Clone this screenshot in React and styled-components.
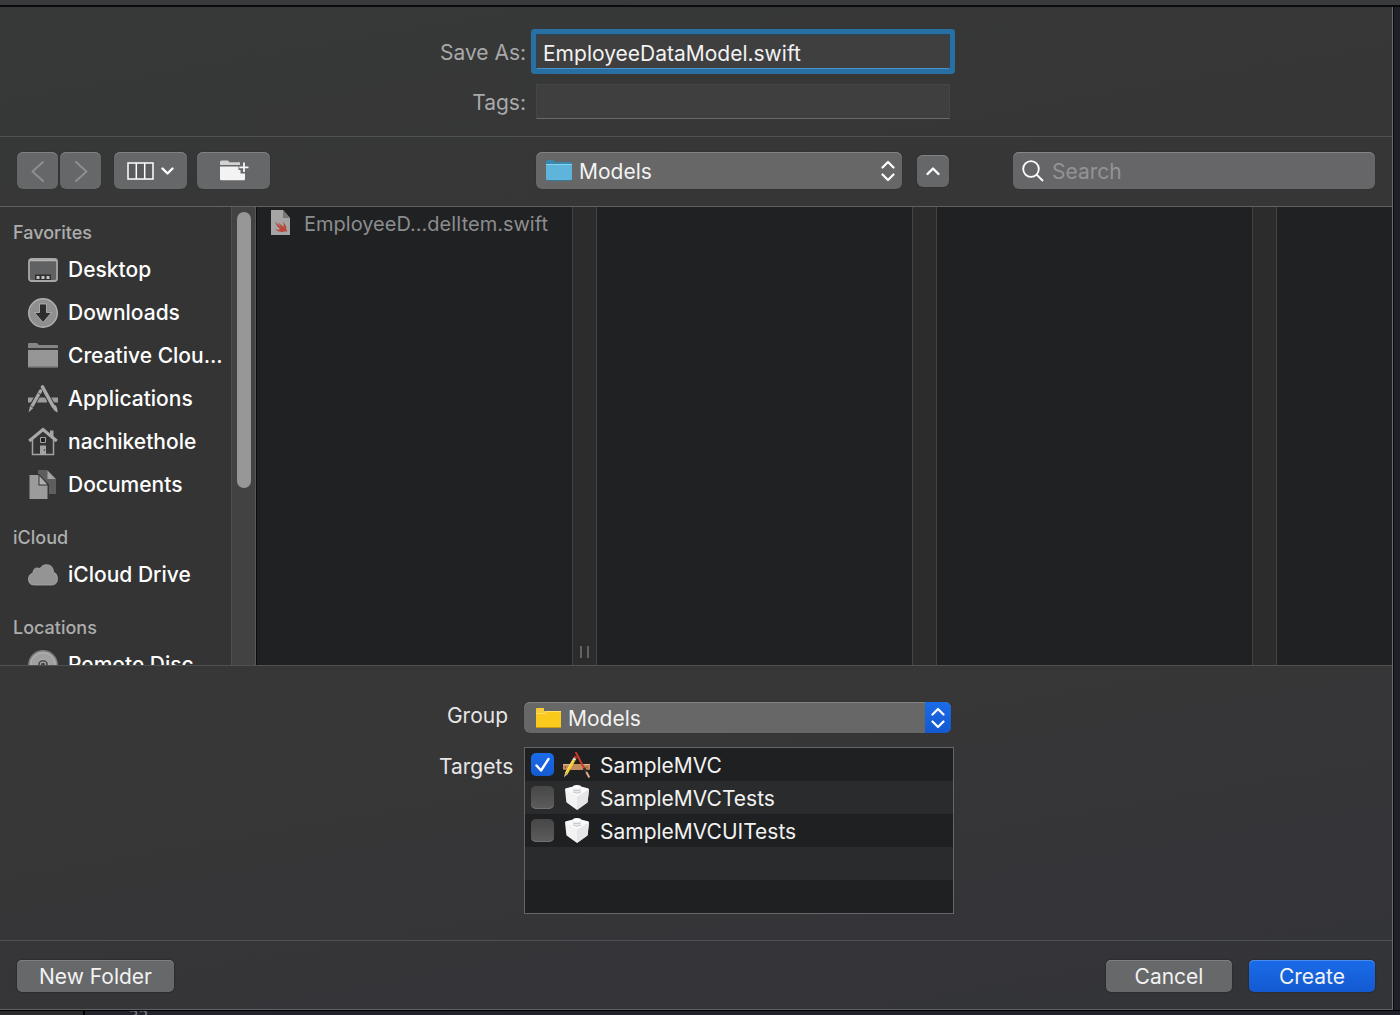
import { useState } from "react";
import styled, { createGlobalStyle } from "styled-components";

const GlobalStyle = createGlobalStyle`
    *{
        box-sizing:border-box;
    }
    body{
        margin:0;
        background-color:#1e1f28;
    }
    body, button, input, select{
        font-family:Inter, "Liberation Sans", sans-serif;
        font-size:21px;
        color:#f2f2f2;
    }
    svg{
        display:block;
        flex:none;
    }
`;

const Screen = styled.div`
    display:flex;
    flex-direction:column;
    height:100vh;
    min-height:800px;
`;
const WindowEdge = styled.div`
    height:7px;
    background-color:#393a3c;
    border-bottom:2px solid #0c0c0d;
`;
const Editor = styled.div`
    display:flex;
    height:5px;
    overflow:hidden;
    border-top:1px solid #000;
    background-color:#22222c;
`;
const EditorGutter = styled.div`
    width:85px;
    border-right:2px solid #000;
    background-color:#2a2a2c;
`;
const LineNumber = styled.span`
    padding-left:44px;
    font-family:"DejaVu Sans Mono", monospace;
    font-size:16px;
    line-height:12px;
    color:#7c7c84;
`;

const Sheet = styled.form`
    display:flex;
    flex-direction:column;
    flex:1;
    min-height:0;
    margin-right:7px;
    border-right:1px solid #6c6d70;
    border-bottom:1px solid #5f6063;
    background:linear-gradient(170deg, #373838 0%, #363637 30%, #373737 65%, #353539 85%, #333438 100%);
    box-shadow:1px 0 0 #08080a;
`;

const NameArea = styled.div`
    display:grid;
    grid-template-columns:86px 414px;
    justify-content:center;
    align-items:center;
    gap:15px 10px;
    padding:27px 2px 17px 0;
    border-bottom:1px solid #4f5051;
`;
const FieldLabel = styled.label`
    padding-top:2px;
    text-align:right;
    white-space:nowrap;
    color:${(props) => (props.$bright ? "#e6e6e6" : "#a9a9a9")};
`;
const TextField = styled.input`
    width:100%;
    height:35px;
    padding:4px 6px 0;
    border:1px solid #444546;
    border-bottom-color:#68696a;
    background-color:#3f3f40;
    outline:none;
    border-radius:0;
    ${(props) => props.$ring && `
        border-color:#28435a;
        border-bottom-color:#4a93c8;
        border-radius:1px;
        box-shadow:0 0 0 5px #286fa3;
    `}
`;

const Toolbar = styled.div`
    display:flex;
    align-items:center;
    padding:15px 17px 17px 17px;
    border-bottom:1px solid #5f6061;
`;
const ToolGroup = styled.div`
    display:flex;
    flex:1;
    gap:10px;
`;
const NavPair = styled.div`
    display:flex;
    gap:2px;
    margin-right:3px;
`;
const ToolButton = styled.button`
    display:flex;
    align-items:center;
    justify-content:center;
    gap:7px;
    width:${(props) => props.$width};
    height:${(props) => props.$height || "37px"};
    padding:0;
    border:none;
    border-radius:6px;
    background-color:#666768;
    box-shadow:inset 0 1px 0 #808182, 0 0 1px #222;
`;
const Popup = styled.div`
    display:flex;
    align-items:center;
    width:${(props) => props.$width};
    height:${(props) => props.$height};
    padding-left:${(props) => props.$pad};
    gap:7px;
    border-radius:6px;
    background-color:#676767;
    box-shadow:inset 0 1px 0 #838383, 0 0 1px #222;
    overflow:hidden;
`;
const PopupSelect = styled.select`
    flex:1;
    height:100%;
    padding:2px 0 0;
    border:none;
    outline:none;
    appearance:none;
    background-color:transparent;
`;
const PopupCap = styled.span`
    display:flex;
    align-items:center;
    justify-content:center;
    width:${(props) => (props.$blue ? "26px" : "28px")};
    height:100%;
    background:${(props) => (props.$blue ? "linear-gradient(#1b6ce8, #1259cf)" : "none")};
`;
const PathGroup = styled.div`
    display:flex;
    align-items:center;
    gap:15px;
    margin-right:64px;
`;
const SearchBox = styled.label`
    display:flex;
    align-items:center;
    gap:8px;
    width:362px;
    height:37px;
    padding-left:9px;
    border-radius:6px;
    background-color:#666668;
    box-shadow:inset 0 1px 0 #858587, 0 0 1px #222;
`;
const SearchInput = styled.input`
    flex:1;
    min-width:0;
    height:100%;
    padding:2px 0 0;
    border:none;
    outline:none;
    background-color:transparent;

    &::placeholder{
        color:#939395;
    }
`;

const Browser = styled.div`
    display:flex;
    flex:1;
    min-height:0;
    border-bottom:1px solid #505151;
`;
const Sidebar = styled.nav`
    width:231px;
    padding-top:9px;
    overflow:hidden;
    background-color:#343434;
`;
const SidebarSection = styled.section`
    margin-bottom:15px;
`;
const SidebarTitle = styled.h2`
    height:32px;
    margin:0;
    padding-left:13px;
    font-size:18px;
    font-weight:500;
    line-height:34px;
    color:#adadad;
`;
const SidebarLink = styled.a`
    display:flex;
    align-items:center;
    gap:10px;
    height:43px;
    padding-left:28px;
    font-weight:500;
    line-height:28px;
    white-space:nowrap;
    color:#fff;
    text-decoration:none;
`;
const ScrollTrack = styled.div`
    width:26px;
    padding:5px 5px 0;
    border-left:1px solid #4d4d4d;
    border-right:1px solid #0d0d0d;
    background-color:#424242;
    box-shadow:inset -1px 0 0 #585858;
`;
const ScrollThumb = styled.div`
    width:14px;
    height:61%;
    border-radius:7px;
    background-color:#979797;
`;
const Column = styled.div`
    width:${(props) => (props.$last ? "auto" : "315px")};
    flex:${(props) => (props.$last ? "1" : "none")};
    background-color:#202123;
`;
const Splitter = styled.div`
    display:flex;
    flex:none;
    align-items:flex-end;
    justify-content:center;
    gap:5px;
    width:25px;
    padding-bottom:7px;
    border-left:1px solid #444;
    border-right:1px solid #444;
    background-color:#2c2c2d;
`;
const Grip = styled.span`
    width:2px;
    height:12px;
    background-color:#626262;
`;
const FileRow = styled.div`
    display:flex;
    gap:14px;
    padding:3px 0 0 14px;
    font-size:20px;
    line-height:28px;
    white-space:nowrap;
    color:#8c8d8e;
`;

const Options = styled.div`
    display:grid;
    grid-template-columns:74px 430px;
    justify-content:center;
    gap:14px 11px;
    padding:36px 0 26px 1px;
    border-bottom:1px solid #4e4f52;
`;
const OptionLabel = styled(FieldLabel)`
    padding:0 ${(props) => props.$inset || "0"} 0 0;
    line-height:${(props) => props.$line};
`;
const TargetList = styled.ul`
    margin:0;
    padding:0;
    list-style:none;
    border:1px solid #656667;
`;
const TargetRow = styled.li`
    height:33px;
    background-color:#1f2022;

    &:nth-child(even){
        background-color:#2a2b2c;
    }
`;
const TargetLabel = styled.label`
    display:flex;
    align-items:center;
    height:100%;
    padding-left:6px;
    line-height:33px;
`;
const TargetName = styled.span`
    padding-top:2px;
`;
const CheckBox = styled.input`
    width:23px;
    height:23px;
    margin:0 9px 0 0;
    appearance:none;
    border-radius:5px;
    background:linear-gradient(#474747, #5c5c5c);
    box-shadow:inset 0 -1px 0 #707070;

    &:checked{
        background:url("data:image/svg+xml,%3Csvg xmlns='http://www.w3.org/2000/svg' viewBox='0 0 23 23'%3E%3Cpath d='M5.500 12.500l4.500 5L17.500 6' fill='none' stroke='white' stroke-width='2.400' stroke-linecap='round' stroke-linejoin='round'/%3E%3C/svg%3E"), linear-gradient(#1b6bea, #145bd0);
        box-shadow:none;
    }
`;
const TargetIcon = styled.span`
    display:flex;
    justify-content:center;
    width:28px;
    margin-right:9px;
`;

const Footer = styled.div`
    display:flex;
    gap:17px;
    padding:19px 17px 17px;
`;
const PushButton = styled.button`
    width:${(props) => props.$width || "126px"};
    height:32px;
    padding:1px 0 0;
    border:none;
    border-radius:5px;
    line-height:32px;
    background:${(props) => (props.$primary ? "linear-gradient(#1a6be9, #135ad0)" : "#67686a")};
    box-shadow:inset 0 1px 0 ${(props) => (props.$primary ? "#4a8bee" : "#7e7f81")}, 0 0 2px #1c1c1e;
`;
const Spacer = styled.span`
    flex:1;
`;

const Chevron = ({ dir, color = "#fff", big }) => {
    const paths = {
        left: "M14 3L3.500 12.500 14 22",
        right: "M4 3l10.500 9.500L4 22",
        up: "M2.500 8L8 2.500 13.500 8",
        down: "M1.500 2.500L6.500 7.500 11.500 2.500",
    };
    return (
        <svg width={big ? 18 : dir === "up" ? 16 : 13} height={big ? 24 : 10} fill="none" stroke={color} strokeWidth={big ? 2 : 2.4} strokeLinecap="round" strokeLinejoin="round">
            <path d={paths[dir]} />
        </svg>
    );
};

const UpDown = () => (
    <svg width="14" height="22" fill="none" stroke="#fff" strokeWidth="2.200" strokeLinecap="round" strokeLinejoin="round">
        <path d="M1.500 7.500L7 2l5.500 5.500M1.500 14.500L7 20l5.500-5.500" />
    </svg>
);

const ColumnsIcon = () => (
    <svg width="27" height="18" fill="#5a5b5c" stroke="#fff" strokeWidth="1.500">
        <path d="M1 1h25v16H1zM9.300 1v16M17.700 1v16" />
    </svg>
);

const AddFolderIcon = () => (
    <svg width="30" height="23">
        <path d="M1 6V3q0-1.500 1.500-1.500H9l1.500 1.800H21V6z" fill="#d2d2d2" />
        <path d="M1 7.500h18.500V11h2v3.500H26V20q0 1.200-1.200 1.200H2.200Q1 21.200 1 20z" fill="#f3f3f3" />
        <path d="M25 3.500v9.500M20.300 8.300h9.200" stroke="#666768" strokeWidth="4.500" />
        <path d="M25 3.500v9.500M20.300 8.300h9.200" stroke="#f5f5f5" strokeWidth="1.800" />
    </svg>
);

const FolderIcon = ({ yellow }) => (
    yellow ? (
        <svg width="25" height="20">
            <path d="M0 1q0-1 1-1h7v3h17v3H0z" fill="#f5cc35" />
            <path d="M0 5h9l1-2h15v17H0z" fill="#fbc91c" />
            <path d="M0 5.500h9l1-2h15" fill="none" stroke="#ffe167" />
            <path d="M0 19.500h25" stroke="#c99a10" />
        </svg>
    ) : (
        <svg width="26" height="21">
            <path d="M0 2q0-2 2-2h5l2 2h15q2 0 2 2v3H0z" fill="#3789ad" />
            <path d="M0 4h26v15q0 1-1 1H1q-1 0-1-1z" fill="#5fb4dc" />
            <path d="M0 4.500h26" stroke="#8bd0ee" />
            <path d="M1 20.500h24" stroke="#377c9c" />
        </svg>
    )
);

const SearchIcon = () => (
    <svg width="22" height="22" fill="none" stroke="#fff" strokeWidth="1.800">
        <circle cx="9" cy="9" r="7.800" />
        <path d="M14.500 14.500L21 21" />
    </svg>
);

const SwiftFile = () => (
    <svg width="19" height="25">
        <path d="M0 0h12l7 8v17H0z" fill="#a5a5a5" />
        <path d="M12 0l7 8h-7z" fill="#77777a" />
        <path d="M3.500 11.500q4.500 4 7 5.500-2-2-4-5 3.500 3 6.500 4.800.3-2.300-1.500-5 4.500 3.200 3.700 7.200 1.300 1.600.8 3-1.300-1.200-2.800-.6-5 2-9.700-2.700 3 1.500 5.700.6-3.200-2.600-5.700-7.800z" fill="#b8483a" />
    </svg>
);

const sidebarIcons = {
    desktop: (
        <svg width="30" height="24">
            <rect x="1" y="1" width="28" height="22" rx="2.500" fill="#606162" stroke="#a7a7a7" strokeWidth="1.800" />
            <path d="M2 2.500h26" stroke="#b4b4b4" strokeWidth="1.500" />
            <path d="M7 16.500h16V22H7z" fill="#2e2e2e" />
            <path d="M8.500 18h3v3h-3zM13.500 18h3v3h-3zM18.500 18h3v3h-3z" fill="#c2c2c2" />
        </svg>
    ),
    downloads: (
        <svg width="30" height="30">
            <circle cx="15" cy="15" r="14.300" fill="#8f8f90" stroke="#b0b0b0" strokeWidth="1.400" />
            <path d="M11.500 6h7v8.500h5L15 24.500 6.500 14.500h5z" fill="#2d2d2e" stroke="#bababa" strokeWidth=".8" />
        </svg>
    ),
    folder: (
        <svg width="30" height="25">
            <path d="M0 1q0-1 1-1h8l2 2h18q1 0 1 1v2H0z" fill="#858585" />
            <path d="M0 7h30v16.500q0 1-1 1H1q-1 0-1-1z" fill="#969697" />
            <path d="M0 6h30" stroke="#3f3f3f" />
            <path d="M1 23.500h28" stroke="#7c7c7c" />
        </svg>
    ),
    apps: (
        <svg width="30" height="28">
            <path d="M0 12.500h8v5H0zM10 12.500h9v5H8zM22 12.500h8v5h-6z" fill="#9c9c9d" />
            <path d="M14 1.500L26 23" stroke="#343434" strokeWidth="5.600" />
            <path d="M14.500 2L25 21" stroke="#a8a8a8" strokeWidth="3.600" strokeLinecap="round" />
            <path d="M24 21.500l3-1.800q3 3 2.500 7.800-4-1.500-5.500-6z" fill="#a8a8a8" />
            <path d="M13 5L3 22.500" stroke="#343434" strokeWidth="5.200" />
            <path d="M12.500 6L3.500 22" stroke="#a8a8a8" strokeWidth="3.400" strokeLinecap="round" />
            <path d="M2 21.500l3 1.800L.5 27.500z" fill="#a8a8a8" />
            <path d="M10 8l3.500 2M2.500 21l3.200 1.800" stroke="#343434" strokeWidth=".8" />
        </svg>
    ),
    home: (
        <svg width="30" height="29">
            <path d="M4.500 13v14.500h21V13" fill="#343435" stroke="#a3a3a4" strokeWidth="1.500" />
            <path d="M22 3.500h3.500V10L22 7z" fill="#a3a3a4" />
            <path d="M1.200 14L15 2.500 28.800 14" fill="none" stroke="#a9a9aa" strokeWidth="3" />
            <path d="M12.500 10.500h5v5h-5z" fill="#222" stroke="#a3a3a4" />
            <path d="M12 18.500h6V27h-6z" fill="#a3a3a4" />
            <circle cx="16.500" cy="23" r=".8" fill="#333" />
        </svg>
    ),
    documents: (
        <svg width="30" height="29">
            <path d="M10 0h9l9 8.500V24H10z" fill="#5d5e5f" />
            <path d="M19.500.5l8 8.500h-8z" fill="#a5a5a5" />
            <path d="M.5 4h10.500L21 14.500V29H.5z" fill="#343434" />
            <path d="M1.500 5h9v10.500h9v13.500h-18z" fill="#9b9b9c" />
            <path d="M11.500 6l7.800 8.500h-7.800z" fill="#b0b0b0" />
        </svg>
    ),
    cloud: (
        <svg width="30" height="22">
            <path d="M6.500 21q-6 0-6-6 0-4.500 4.500-6 0-5 4.500-5 1.500 0 2.500.8Q14 .7 18.500.7q6.500 0 7 7.300 4 1.500 4 6.500 0 6.500-6 6.500z" fill="#949495" stroke="#ababab" strokeWidth=".8" />
        </svg>
    ),
    disc: (
        <svg width="30" height="30">
            <circle cx="15" cy="15" r="14.300" fill="#a0a0a1" stroke="#7c7c7c" strokeWidth="1.400" />
            <circle cx="15" cy="15" r="12.300" fill="none" stroke="#b4b4b4" />
            <circle cx="15" cy="15" r="5.500" fill="#444" stroke="#c0c0c0" strokeWidth=".8" />
            <circle cx="15" cy="15" r="2.800" fill="#444" stroke="#a4a4a5" strokeWidth="1.200" />
        </svg>
    ),
};

const AppTargetIcon = () => (
    <svg width="28" height="26">
        <path d="M0 12h27v6H0z" fill="#c48a60" />
        <path d="M0 12.500h27" stroke="#e3b48c" />
        <path d="M0 17.500h27" stroke="#a06c45" />
        <path d="M2.500 14.500v1.500M16 14.500v1.500M24 14.500v1.500" stroke="#7a4f33" />
        <path d="M8.500 18h11L14 6.500z" fill="#1f2022" />
        <path d="M9.500 12h8.500l2 6h-12z" fill="#c48a60" />
        <path d="M13 .8l8.300 15.700" stroke="#c93a25" strokeWidth="2" strokeLinecap="round" />
        <path d="M21 16l2.500 4.500" stroke="#3a2f2c" strokeWidth="2.600" />
        <path d="M23.300 20l3 5.500" stroke="#e0aa94" strokeWidth="2" />
        <path d="M11 8L3.300 21.500" stroke="#f2d02c" strokeWidth="3" />
        <path d="M10.200 7.200L2.600 20.800" stroke="#fbe772" strokeWidth=".8" />
        <path d="M12.900 4.600l-1 1.700" stroke="#d9362a" strokeWidth="3" />
        <path d="M11.900 6.300L10.900 8" stroke="#e8e8e8" strokeWidth="3" />
        <path d="M2 20.700l2.700 1.600L1 25.200z" fill="#d9b98a" />
    </svg>
);

const TestTargetIcon = () => (
    <svg width="24" height="25">
        <path d="M0 4.200Q0 3.500 1 3.200L8 1.500Q8.500 0 12 0t4 1.500l7 1.700q1 .3 1 1L22.700 16.500q-.2 1-1 1.500L12.700 24.600q-.7.500-1.400 0L2.300 18q-.8-.5-1-1.500z" fill="#f3f3f4" />
        <path d="M12 11.500L24 4.200 22.700 16.500q-.2 1-1 1.500L12 25z" fill="#e6e6e8" />
        <path d="M.3 4.200L12 11.500l11.700-7.300L16 2H8z" fill="#fafafa" />
        <path d="M8 2v5q4 2.500 8 0V2z" fill="#ebebed" />
        <path d="M8 7q4 2.500 8 0" fill="none" stroke="#bdbdc0" strokeWidth=".8" />
        <path d="M8.500 5.500h7" stroke="#c9c9cc" />
        <ellipse cx="12" cy="2" rx="4" ry="1.800" fill="#fff" />
    </svg>
);

const places = [
    {
        title: "Favorites",
        items: [
            ["Desktop", "desktop"],
            ["Downloads", "downloads"],
            ["Creative Clou...", "folder"],
            ["Applications", "apps"],
            ["nachikethole", "home"],
            ["Documents", "documents"],
        ],
    },
    { title: "iCloud", items: [["iCloud Drive", "cloud"]] },
    { title: "Locations", items: [["Remote Disc", "disc"]] },
];

export default function App() {
    const [fileName, setFileName] = useState("EmployeeDataModel.swift");
    const [tags, setTags] = useState("");
    const [search, setSearch] = useState("");
    const [targets, setTargets] = useState([
        { name: "SampleMVC", app: true, checked: true },
        { name: "SampleMVCTests", checked: false },
        { name: "SampleMVCUITests", checked: false },
    ]);

    const toggleTarget = (name) => {
        setTargets(targets.map((t) => (t.name === name ? { ...t, checked: !t.checked } : t)));
    };

    return (
        <Screen>
            <GlobalStyle />
            <WindowEdge />
            <Sheet onSubmit={(e) => e.preventDefault()} autoComplete="off">
                <NameArea>
                    <FieldLabel htmlFor="saveAs">Save As:</FieldLabel>
                    <TextField $ring id="saveAs" spellCheck="false" value={fileName} onChange={(e) => setFileName(e.target.value)} />
                    <FieldLabel htmlFor="tags">Tags:</FieldLabel>
                    <TextField id="tags" value={tags} onChange={(e) => setTags(e.target.value)} />
                </NameArea>

                <Toolbar>
                    <ToolGroup>
                        <NavPair>
                            <ToolButton type="button" $width="41px" aria-label="Back"><Chevron dir="left" big color="#8e8f90" /></ToolButton>
                            <ToolButton type="button" $width="41px" aria-label="Forward"><Chevron dir="right" big color="#8e8f90" /></ToolButton>
                        </NavPair>
                        <ToolButton type="button" $width="73px" aria-label="View as columns"><ColumnsIcon /><Chevron dir="down" /></ToolButton>
                        <ToolButton type="button" $width="73px" aria-label="Group items"><AddFolderIcon /></ToolButton>
                    </ToolGroup>
                    <PathGroup>
                        <Popup $width="366px" $height="37px" $pad="10px">
                            <FolderIcon />
                            <PopupSelect aria-label="Location"><option>Models</option></PopupSelect>
                            <PopupCap><UpDown /></PopupCap>
                        </Popup>
                        <ToolButton type="button" $width="32px" $height="32px" aria-label="Collapse"><Chevron dir="up" /></ToolButton>
                    </PathGroup>
                    <SearchBox>
                        <SearchIcon />
                        <SearchInput aria-label="Search" placeholder="Search" value={search} onChange={(e) => setSearch(e.target.value)} />
                    </SearchBox>
                </Toolbar>

                <Browser>
                    <Sidebar>
                        {places.map((section) => (
                            <SidebarSection key={section.title}>
                                <SidebarTitle>{section.title}</SidebarTitle>
                                {section.items.map(([label, icon]) => (
                                    <SidebarLink href="#" key={label}>{sidebarIcons[icon]}{label}</SidebarLink>
                                ))}
                            </SidebarSection>
                        ))}
                    </Sidebar>
                    <ScrollTrack><ScrollThumb /></ScrollTrack>
                    <Column>
                        <FileRow><SwiftFile />EmployeeD…delItem.swift</FileRow>
                    </Column>
                    <Splitter><Grip /><Grip /></Splitter>
                    <Column />
                    <Splitter />
                    <Column />
                    <Splitter />
                    <Column $last />
                </Browser>

                <Options>
                    <OptionLabel $bright $inset="5px" $line="28px" htmlFor="group">Group</OptionLabel>
                    <Popup $width="427px" $height="31px" $pad="12px">
                        <FolderIcon yellow />
                        <PopupSelect id="group"><option>Models</option></PopupSelect>
                        <PopupCap $blue><UpDown /></PopupCap>
                    </Popup>
                    <OptionLabel as="span" $bright $line="40px" id="targets">Targets</OptionLabel>
                    <TargetList aria-labelledby="targets">
                        {targets.map((t) => (
                            <TargetRow key={t.name}>
                                <TargetLabel>
                                    <CheckBox type="checkbox" checked={t.checked} onChange={() => toggleTarget(t.name)} />
                                    <TargetIcon>{t.app ? <AppTargetIcon /> : <TestTargetIcon />}</TargetIcon>
                                    <TargetName>{t.name}</TargetName>
                                </TargetLabel>
                            </TargetRow>
                        ))}
                        <TargetRow />
                        <TargetRow />
                    </TargetList>
                </Options>

                <Footer>
                    <PushButton type="button" $width="157px">New Folder</PushButton>
                    <Spacer />
                    <PushButton type="button">Cancel</PushButton>
                    <PushButton type="submit" $primary>Create</PushButton>
                </Footer>
            </Sheet>
            <Editor>
                <EditorGutter />
                <LineNumber>32</LineNumber>
            </Editor>
        </Screen>
    );
}
